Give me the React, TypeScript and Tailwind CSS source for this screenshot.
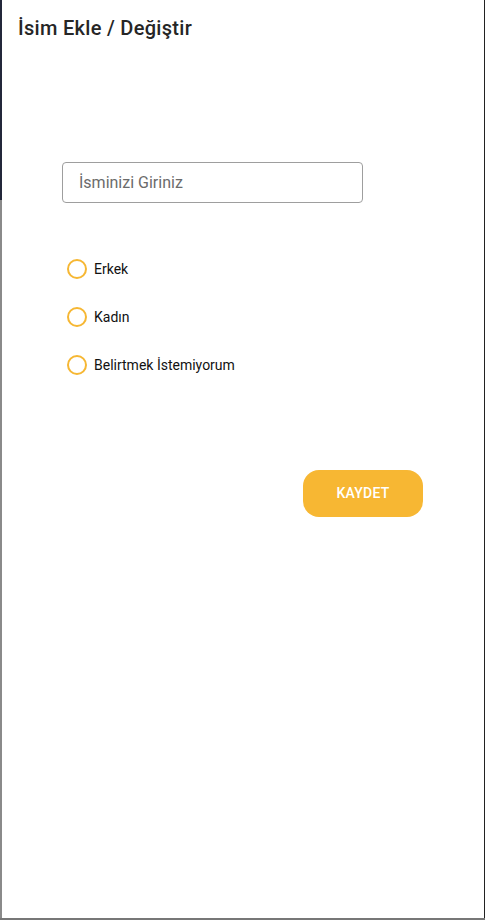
import React, { useState } from 'react';

const options = ['Erkek', 'Kadın', 'Belirtmek İstemiyorum'];

export default function App() {
  const [name, setName] = useState('');
  const [gender, setGender] = useState<string | null>(null);

  return (
    <div className="relative h-[920px] w-[485px] overflow-hidden bg-white font-['Roboto',sans-serif]">
      {/* window frame edges */}
      <div className="absolute left-0 top-0 h-[200px] w-[2px] bg-[#23273a]"></div>
      <div className="absolute left-0 top-[200px] h-[720px] w-[2px] bg-[#8a8a8a]"></div>
      <div className="absolute right-0 top-0 h-[920px] w-[1px] bg-[#222]"></div>
      <div className="absolute bottom-0 left-0 h-[2px] w-[485px] bg-[#777]"></div>

      <h1 className="pl-[18px] pt-[15px] text-[20px] font-medium leading-[26px] tracking-[0.3px] text-[#262626]">
        İsim Ekle / Değiştir
      </h1>

      <div className="pl-[62px] pt-[121px]">
        <input
          value={name}
          onChange={(e) => setName(e.target.value)}
          placeholder="İsminizi Giriniz"
          className="h-[41px] w-[301px] rounded-[4px] border border-[#9e9e9e] px-[16px] text-[16px] text-[#212121] outline-none placeholder:text-[#6b6b6b]"
        />
      </div>

      <div className="flex flex-col pl-[67px] pt-[42px]">
        {options.map((opt) => (
          <label key={opt} className="flex h-[48px] cursor-pointer items-center gap-[7px]">
            <span className="flex h-[20px] w-[20px] items-center justify-center rounded-full border-2 border-[#f6b733]">
              {gender === opt && <span className="h-[10px] w-[10px] rounded-full bg-[#f6b733]"></span>}
            </span>
            <input
              type="radio"
              name="gender"
              className="hidden"
              checked={gender === opt}
              onChange={() => setGender(opt)}
            />
            <span className="text-[14px] text-[#111]">{opt}</span>
          </label>
        ))}
      </div>

      <div className="flex justify-end pr-[62px] pt-[81px]">
        <button className="h-[47px] w-[120px] rounded-[16px] bg-[#f7b733] text-[14px] font-medium tracking-[0.2px] text-white">
          KAYDET
        </button>
      </div>
    </div>
  );
}
